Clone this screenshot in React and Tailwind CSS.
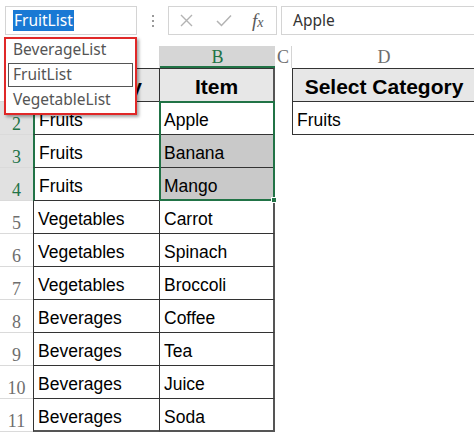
import React from "react";

const data = [
  ["Fruits", "Apple"],
  ["Fruits", "Banana"],
  ["Fruits", "Mango"],
  ["Vegetables", "Carrot"],
  ["Vegetables", "Spinach"],
  ["Vegetables", "Broccoli"],
  ["Beverages", "Coffee"],
  ["Beverages", "Tea"],
  ["Beverages", "Juice"],
  ["Beverages", "Soda"],
];

function RowHdr({ n, sel }) {
  return (
    <div
      className={
        "flex items-end justify-center leading-none pb-[1px] border-b border-[#dadada] font-['Liberation_Serif',serif] text-[18px] " +
        (sel ? "bg-[#e1e1e1] text-[#217346]" : "bg-white text-[#6e6e6e]")
      }
    >
      {n}
    </div>
  );
}

export default function App() {
  return (
    <div className="relative w-[474px] h-[438px] overflow-hidden bg-white flex flex-col font-['Liberation_Sans',Arial,sans-serif]">
      {/* Top bar */}
      <div className="flex h-[29px] mt-[6px] ml-[5px] font-['Noto_Sans',sans-serif] text-[15.5px]">
        <div className="w-[132px] border border-[#d4d4d4] flex items-center pl-[7px]">
          <span className="bg-[#1979d4] text-white leading-[21px] px-[1px]">FruitList</span>
        </div>
        <div className="w-[31px] flex flex-col items-center justify-center gap-[3px]">
          <span className="w-[2px] h-[2px] bg-[#9a9a9a]" />
          <span className="w-[2px] h-[2px] bg-[#9a9a9a]" />
          <span className="w-[2px] h-[2px] bg-[#9a9a9a]" />
        </div>
        <div className="w-[109px] border border-[#d4d4d4] flex items-center pl-[11px]">
          <svg width="13" height="13" viewBox="0 0 13 13">
            <path d="M1 1 L12 12 M12 1 L1 12" stroke="#b3b3b3" strokeWidth="1.4" fill="none" />
          </svg>
          <svg width="16" height="13" viewBox="0 0 16 13" className="ml-[23px]">
            <path d="M1 7 L5.5 11.5 L15 1.5" stroke="#b3b3b3" strokeWidth="1.5" fill="none" />
          </svg>
          <span className="ml-[20px] font-['Liberation_Serif',serif] italic text-[#5a5a5a] text-[19px] leading-none">
            f<span className="text-[14px]">x</span>
          </span>
        </div>
        <div className="w-[4px]" />
        <div className="flex-1 border-y border-l border-[#d4d4d4] flex items-center pl-[11px] text-[#333]">
          Apple
        </div>
      </div>

      {/* Sheet grid */}
      <div className="relative mt-[11px] flex-1 grid grid-cols-[33px_127px_115px_17px_184px] grid-rows-[22px_34px_repeat(10,33px)_1fr]">
        {/* column header row */}
        <div className="bg-white" />
        <div className="bg-white flex items-end justify-center leading-none font-['Liberation_Serif',serif] text-[18px] text-[#6e6e6e] border-r border-[#d4d4d4]">A</div>
        <div className="bg-[#d6d6d6] border-b-2 border-[#217346] flex items-end justify-center leading-none font-['Liberation_Serif',serif] text-[18px] text-[#217346]">B</div>
        <div className="bg-white border-r border-[#d4d4d4] flex items-end justify-center leading-none pb-[2px] font-['Liberation_Serif',serif] text-[18px] text-[#6e6e6e]">C</div>
        <div className="bg-white flex items-end justify-center leading-none pb-[2px] font-['Liberation_Serif',serif] text-[18px] text-[#6e6e6e]">D</div>

        {/* row 1 */}
        <RowHdr n={1} />
        <div className="bg-[#e7e7e7] border-t border-l border-r border-b border-[#333] flex items-center justify-center leading-none pt-[2px] font-bold text-[21px] text-black">Category</div>
        <div className="bg-[#e7e7e7] border-t border-b border-r-2 border-[#333] border-r-[#555] flex items-center justify-center leading-none pt-[2px] font-bold text-[21px] text-black">Item</div>
        <div className="bg-white" />
        <div className="bg-[#e7e7e7] border border-[#333] flex items-center justify-center leading-none pt-[2px] font-bold text-[21px] text-black">Select Category</div>

        {data.map(([cat, item], i) => {
          const r = i + 2;
          const sel = r >= 2 && r <= 4;
          const shaded = r === 3 || r === 4;
          const last = r === 11;
          return (
            <React.Fragment key={r}>
              <RowHdr n={r} sel={sel} />
              <div
                className={
                  "bg-white border-r border-b border-[#333] flex items-center pl-[4px] pt-[6px] leading-none text-[17.5px] text-black " +
                  (sel ? "border-l-2 border-l-[#217346] pl-[3px] " : "border-l ") +
                  (last ? "border-b-2 border-b-[#555]" : "")
                }
              >
                {cat}
              </div>
              <div
                className={
                  "border-b border-r-2 border-[#333] border-r-[#555] flex items-center pl-[4px] pt-[6px] leading-none text-[17.5px] text-black " +
                  (shaded ? "bg-[#c9c9c9] " : "bg-white ") +
                  (last ? "border-b-2 border-b-[#555]" : "")
                }
              >
                {item}
              </div>
              <div className="bg-white" />
              {r === 2 ? (
                <div className="bg-white border-l border-r border-b border-[#333] flex items-center pl-[4px] pt-[6px] leading-none text-[17.5px] text-black">Fruits</div>
              ) : (
                <div className="bg-white" />
              )}
            </React.Fragment>
          );
        })}

        {/* remainder row */}
        <div className="bg-white" />
        <div />
        <div />
        <div />
        <div />

        {/* selection outline B2:B4 */}
        <div className="absolute col-start-3 col-end-4 row-start-3 row-end-6 -top-px -left-px right-0 bottom-0 border-2 border-[#217346] pointer-events-none">
          <div className="absolute -right-[4px] -bottom-[4px] w-[6px] h-[6px] bg-[#217346] border border-white" />
        </div>
      </div>

      {/* Name box dropdown */}
      <div className="absolute left-[4px] top-[37px] w-[133px] h-[78px] border-2 border-[#e02828] bg-white shadow-[2px_2px_3px_rgba(0,0,0,0.35)] font-['Noto_Sans',sans-serif] text-[15.5px] text-[#555] flex flex-col">
        <div className="h-[24px] mx-[2px] px-[4px] border border-transparent flex items-center leading-none pb-[3px]">BeverageList</div>
        <div className="h-[24px] mx-[2px] px-[4px] border border-[#555] flex items-center leading-none">FruitList</div>
        <div className="h-[26px] mx-[2px] px-[4px] border border-transparent flex items-center leading-none">VegetableList</div>
      </div>
    </div>
  );
}
